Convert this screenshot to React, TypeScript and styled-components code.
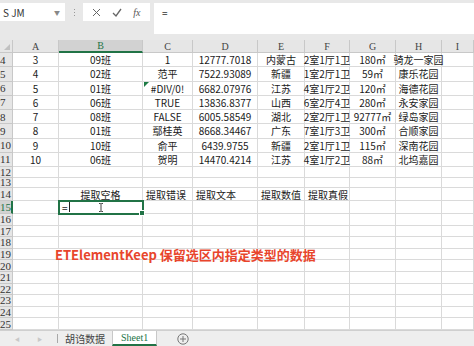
import React from "react";
import styled, { createGlobalStyle } from "styled-components";

const GREEN = "#217346";
const GRID = "#dadada";

const GlobalStyle = createGlobalStyle`
  html, body { margin: 0; padding: 0; background: #fff; }
  body { font-family: "Noto Sans CJK SC", "Noto Sans", sans-serif; }
`;

const Page = styled.div`
  width: 474px;
  height: 346px;
  overflow: hidden;
  display: flex;
  flex-direction: column;
  background: #fff;
`;

const TopBar = styled.div`
  height: 40px;
  flex: none;
  background: #e8e8e8;
  display: flex;
  align-items: flex-start;
  padding-top: 3px;
  box-sizing: border-box;
`;

const NameBox = styled.div`
  width: 65px;
  height: 18px;
  background: #fff;
  display: flex;
  align-items: center;
  justify-content: space-between;
  padding: 0 5px 0 3px;
  box-sizing: border-box;
  font-size: 10px;
  color: #333;
`;

const Arrow = styled.span`
  font-size: 6px;
  color: #888;
`;

const Dots = styled.div`
  width: 18px;
  height: 18px;
  display: flex;
  flex-direction: column;
  align-items: center;
  justify-content: center;
  gap: 2px;

  span {
    width: 1px;
    height: 1px;
    background: #999;
  }
`;

const FxBox = styled.div`
  width: 67px;
  height: 18px;
  background: #fff;
  display: flex;
  align-items: center;
  justify-content: space-around;
  padding: 0 4px;
  box-sizing: border-box;
  color: #555;
  margin-right: 4px;
`;

const Fx = styled.span`
  font-family: "Liberation Serif", serif;
  font-style: italic;
  font-size: 10px;
  color: #555;
`;

const FormulaInput = styled.div`
  flex: 1;
  height: 31px;
  background: #fff;
  padding: 2px 0 0 8px;
  box-sizing: border-box;
  font-size: 10px;
  color: #333;
`;

const Sheet = styled.div`
  flex: none;
  display: grid;
  grid-template-columns: 13px 46px 84px 50px 65px 47px 45px 46px 46px 1fr;
  grid-template-rows:
    13px repeat(8, 14.25px) 10.5px 10.5px 13px 13px
    repeat(10, 11.6px);
  height: 290px;
  overflow: hidden;
`;

const Corner = styled.div`
  background: #e6e6e6;
  border-right: 1px solid #c8c8c8;
  border-bottom: 1px solid #c8c8c8;
  box-sizing: border-box;
  position: relative;

  &::after {
    content: "";
    position: absolute;
    right: 2px;
    bottom: 2px;
    border-left: 6px solid transparent;
    border-bottom: 6px solid #c0c0c0;
  }
`;

const ColHead = styled.div<{ $active?: boolean }>`
  background: ${(p) => (p.$active ? "#d2d2d2" : "#e6e6e6")};
  border-right: 1px solid #c8c8c8;
  border-bottom: ${(p) => (p.$active ? `2px solid ${GREEN}` : "1px solid #c8c8c8")};
  box-sizing: border-box;
  display: flex;
  align-items: center;
  justify-content: center;
  font-family: "Liberation Serif", serif;
  font-size: 10px;
  color: ${(p) => (p.$active ? GREEN : "#444")};
`;

const RowHead = styled.div<{ $active?: boolean }>`
  background: ${(p) => (p.$active ? "#d2d2d2" : "#e6e6e6")};
  border-right: ${(p) => (p.$active ? `2px solid ${GREEN}` : "1px solid #c8c8c8")};
  border-bottom: 1px solid #c8c8c8;
  box-sizing: border-box;
  display: flex;
  align-items: center;
  font-family: "Liberation Serif", serif;
  font-size: 11px;
  color: ${(p) => (p.$active ? GREEN : "#333")};
  overflow: hidden;
  white-space: nowrap;
`;

const Cell = styled.div<{
  $align?: "center" | "left";
  $flag?: boolean;
  $selected?: boolean;
}>`
  position: relative;
  border-right: 1px solid ${GRID};
  border-bottom: 1px solid ${GRID};
  box-sizing: border-box;
  display: flex;
  align-items: center;
  justify-content: ${(p) => (p.$align === "left" ? "flex-start" : "center")};
  padding-left: ${(p) => (p.$align === "left" ? "3px" : "0")};
  font-size: 10px;
  color: #1a1a1a;
  white-space: nowrap;
  z-index: ${(p) => (p.$selected ? 2 : "auto")};
  outline: ${(p) => (p.$selected ? `2px solid ${GREEN}` : "none")};
  outline-offset: -1px;

  &::before {
    content: "";
    display: ${(p) => (p.$flag ? "block" : "none")};
    position: absolute;
    left: 1px;
    top: 0;
    border-top: 5px solid #1e7b45;
    border-right: 5px solid transparent;
  }

  &::after {
    content: "";
    display: ${(p) => (p.$selected ? "block" : "none")};
    position: absolute;
    right: -3px;
    bottom: -3px;
    width: 4px;
    height: 4px;
    background: ${GREEN};
    border: 1px solid #fff;
  }
`;

const Caret = styled.span`
  display: inline-block;
  width: 1px;
  height: 10px;
  background: #222;
  margin-left: 1px;
`;

const IBeam = styled.svg`
  position: absolute;
  left: 39px;
  top: 2px;
`;

const Caption = styled.div`
  position: relative;
  z-index: 1;
  grid-column: span 6;
  border-right: 1px solid ${GRID};
  border-bottom: 1px solid ${GRID};
  box-sizing: border-box;
  display: flex;
  align-items: center;
  padding-left: 42px;
  white-space: nowrap;
  font-size: 13px;
  font-weight: 700;
  color: #e8452c;
`;

const TabBar = styled.div`
  flex: 1;
  background: #eeeeee;
  border-top: 1px solid #cfcfcf;
  display: flex;
  align-items: stretch;
  font-size: 10px;
`;

const Nav = styled.div`
  width: 58px;
  display: flex;
  align-items: center;
  justify-content: space-around;
  padding: 0 6px;
  box-sizing: border-box;
  color: #c8c8c8;
  font-size: 5px;
  border-right: 1px solid #a8a8a8;
  margin: 3px 0;
`;

const Tab = styled.div<{ $active?: boolean }>`
  display: flex;
  align-items: center;
  padding: 0 ${(p) => (p.$active ? "8px" : "7px")};
  background: ${(p) => (p.$active ? "#fff" : "transparent")};
  color: ${(p) => (p.$active ? GREEN : "#444")};
  border-bottom: ${(p) => (p.$active ? `2px solid ${GREEN}` : "none")};
  border-right: ${(p) => (p.$active ? "1px solid #c8c8c8" : "none")};
  border-left: ${(p) => (p.$active ? "1px solid #c8c8c8" : "none")};
  font-family: ${(p) =>
    p.$active ? '"Liberation Serif", serif' : '"Noto Sans CJK SC", sans-serif'};
`;

const AddBtn = styled.div`
  display: flex;
  align-items: center;
  margin-left: 20px;
`;

const data: string[][] = [
  ["3", "09班", "1", "12777.7018", "内蒙古", "2室1厅1卫", "180㎡", "骑龙一家园"],
  ["4", "02班", "范平", "7522.93089", "新疆", "1室2厅1卫", "59㎡", "康乐花园"],
  ["5", "01班", "#DIV/0!", "6682.07976", "江苏", "4室1厅2卫", "120㎡", "海德花园"],
  ["6", "06班", "TRUE", "13836.8377", "山西", "6室2厅4卫", "280㎡", "永安家园"],
  ["7", "08班", "FALSE", "6005.58549", "湖北", "2室2厅1卫", "92777㎡", "绿岛家园"],
  ["8", "01班", "鄢桂英", "8668.34467", "广东", "7室1厅3卫", "300㎡", "合顺家园"],
  ["9", "10班", "俞平", "6439.9755", "新疆", "2室1厅1卫", "115㎡", "深南花园"],
  ["10", "06班", "贺明", "14470.4214", "江苏", "4室1厅2卫", "88㎡", "北坞嘉园"],
];

const cols = ["A", "B", "C", "D", "E", "F", "G", "H", "I"];
const labels = ["", "提取空格", "提取错误", "提取文本", "提取数值", "提取真假", "", "", ""];

const emptyRow = (n: number) => [
  <RowHead key={`h${n}`}>{n}</RowHead>,
  ...cols.map((c) => <Cell key={`${c}${n}`} />),
];

export default function App() {
  const rows: React.ReactNode[] = [];

  data.forEach((vals, i) => {
    const n = i + 4;
    rows.push(<RowHead key={`h${n}`}>{n}</RowHead>);
    [...vals, ""].forEach((v, j) => {
      rows.push(
        <Cell key={`${cols[j]}${n}`} $flag={n === 6 && j === 2}>
          {v}
        </Cell>
      );
    });
  });

  rows.push(...emptyRow(12), ...emptyRow(13));

  rows.push(<RowHead key="h14">14</RowHead>);
  labels.forEach((l, j) => {
    rows.push(
      <Cell key={`${cols[j]}14`} $align={j === 1 ? "center" : "left"}>
        {l}
      </Cell>
    );
  });

  rows.push(
    <RowHead key="h15" $active>
      15
    </RowHead>
  );
  cols.forEach((c, j) => {
    rows.push(
      j === 1 ? (
        <Cell key="B15" $align="left" $selected>
          =<Caret />
          <IBeam width="6" height="9" viewBox="0 0 6 9">
            <path d="M1 0.5h1.5l0.5 0.5 0.5-0.5h1.5M3 1v7M1 8.5h1.5l0.5-0.5 0.5 0.5h1.5" stroke="#444" strokeWidth="1" fill="none" />
          </IBeam>
        </Cell>
      ) : (
        <Cell key={`${c}15`} />
      )
    );
  });

  for (let n = 16; n <= 25; n++) {
    if (n === 19) {
      rows.push(<RowHead key="h19">19</RowHead>);
      rows.push(
        <Caption key="cap">ETElementKeep 保留选区内指定类型的数据</Caption>
      );
      cols.slice(6).forEach((c) => rows.push(<Cell key={`${c}19`} />));
    } else {
      rows.push(...emptyRow(n));
    }
  }

  return (
    <>
      <GlobalStyle />
      <Page>
        <TopBar>
          <NameBox>
            <span>S JM</span>
            <Arrow>▼</Arrow>
          </NameBox>
          <Dots>
            <span />
            <span />
            <span />
          </Dots>
          <FxBox>
            <svg width="9" height="9" viewBox="0 0 9 9">
              <path d="M1 1l7 7M8 1l-7 7" stroke="#666" strokeWidth="1" />
            </svg>
            <svg width="10" height="9" viewBox="0 0 10 9">
              <path d="M1 5l3 3 5-7" stroke="#666" strokeWidth="1.3" fill="none" />
            </svg>
            <Fx>fx</Fx>
          </FxBox>
          <FormulaInput>=</FormulaInput>
        </TopBar>
        <Sheet>
          <Corner />
          {cols.map((c) => (
            <ColHead key={c} $active={c === "B"}>
              {c}
            </ColHead>
          ))}
          {rows}
        </Sheet>
        <TabBar>
          <Nav>
            <span>◀</span>
            <span>▶</span>
          </Nav>
          <Tab>胡诌数据</Tab>
          <Tab $active>Sheet1</Tab>
          <AddBtn>
            <svg width="12" height="12" viewBox="0 0 12 12">
              <circle cx="6" cy="6" r="5.2" stroke="#777" strokeWidth="1" fill="none" />
              <path d="M6 3v6M3 6h6" stroke="#777" strokeWidth="1" />
            </svg>
          </AddBtn>
        </TabBar>
      </Page>
    </>
  );
}
